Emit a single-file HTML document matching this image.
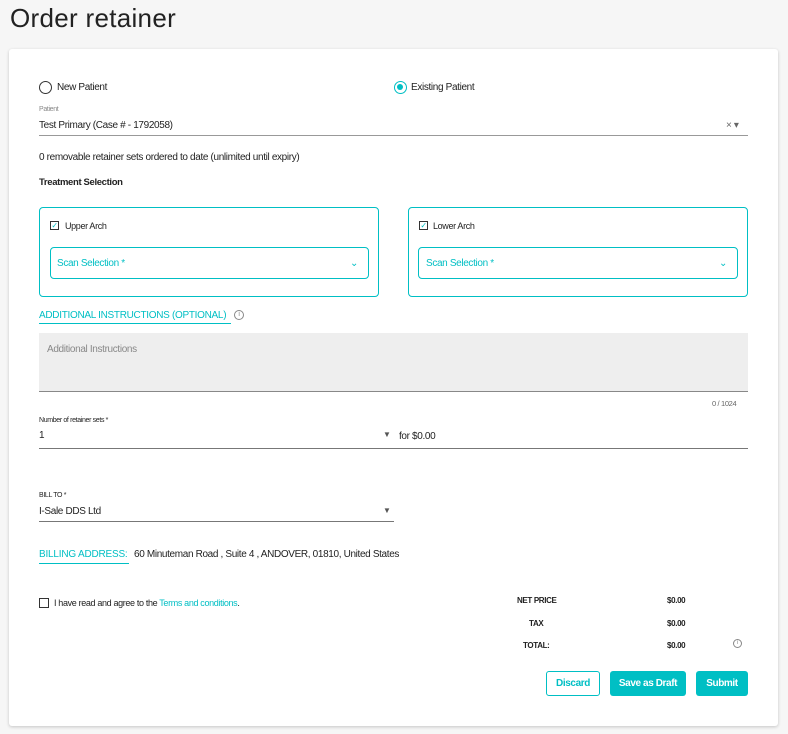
<!DOCTYPE html>
<html><head><style>
*{box-sizing:border-box;margin:0;padding:0}
body{width:788px;height:734px;background:#f6f6f6;font-family:"Liberation Sans",sans-serif;color:#222;position:relative;overflow:hidden;font-size:10px;letter-spacing:-0.35px}
.a{position:absolute}
h1{position:absolute;left:10px;top:3px;font-size:26px;font-weight:normal;color:#222;letter-spacing:0.3px}
.card{position:absolute;left:9px;top:49px;width:769px;height:677px;background:#fff;border-radius:3px;box-shadow:0 1px 3px rgba(0,0,0,.2)}
.t{color:#00bfc4}
.radio{width:13px;height:13px;border:1.5px solid #333;border-radius:50%}
.box{border:1px solid #00bfc4;border-radius:4px}
.cb{width:9px;height:9px;border:1px solid #333;font-size:8px;color:#00bfc4;line-height:7px;text-align:center}
.btn{position:absolute;top:671px;height:25px;border-radius:3px;font-size:10px;font-weight:bold;text-align:center;line-height:25px;letter-spacing:-0.4px}
</style></head><body>
<h1>Order retainer</h1>
<div class="card"></div>
<div class="a radio" style="left:39px;top:81px"></div>
<div class="a" style="left:57px;top:82px">New Patient</div>
<div class="a radio" style="left:394px;top:81px;border-color:#00bfc4"><div style="width:6px;height:6px;border-radius:50%;background:#00bfc4;margin:2px"></div></div>
<div class="a" style="left:411px;top:82px">Existing Patient</div>
<div class="a" style="left:39px;top:106px;font-size:7px;color:#888">Patient</div>
<div class="a" style="left:39px;top:120px">Test Primary (Case # - 1792058)</div>
<div class="a" style="left:726px;top:120px;color:#666">× ▾</div>
<div class="a" style="left:39px;top:135px;width:709px;height:1px;background:#999"></div>
<div class="a" style="left:39px;top:152px">0 removable retainer sets ordered to date (unlimited until expiry)</div>
<div class="a" style="left:39px;top:177px;font-weight:bold;font-size:9.5px">Treatment Selection</div>
<div class="a box" style="left:39px;top:207px;width:340px;height:90px"></div>
<div class="a cb" style="left:50px;top:221px">✓</div>
<div class="a" style="left:65px;top:221px;font-size:9px">Upper Arch</div>
<div class="a box" style="left:50px;top:247px;width:319px;height:32px"></div>
<div class="a t" style="left:57px;top:258px">Scan Selection *</div>
<div class="a t" style="left:350px;top:258px">⌄</div>
<div class="a box" style="left:408px;top:207px;width:340px;height:90px"></div>
<div class="a cb" style="left:419px;top:221px">✓</div>
<div class="a" style="left:433px;top:221px;font-size:9px">Lower Arch</div>
<div class="a box" style="left:418px;top:247px;width:320px;height:32px"></div>
<div class="a t" style="left:426px;top:258px">Scan Selection *</div>
<div class="a t" style="left:719px;top:258px">⌄</div>
<div class="a t" style="left:39px;top:310px;font-size:10px;letter-spacing:-0.3px">ADDITIONAL INSTRUCTIONS (OPTIONAL)</div>
<div class="a" style="left:39px;top:323px;width:192px;height:1px;background:#00bfc4"></div>
<div class="a" style="left:234px;top:310px;width:10px;height:10px;border:1px solid #888;border-radius:50%;font-size:7px;text-align:center;line-height:8px;color:#888">i</div>
<div class="a" style="left:39px;top:333px;width:709px;height:59px;background:#eee;border-bottom:1px solid #888"></div>
<div class="a" style="left:47px;top:344px;color:#888">Additional Instructions</div>
<div class="a" style="left:712px;top:399px;font-size:7.5px;color:#666">0 / 1024</div>
<div class="a" style="left:39px;top:417px;font-size:7px">Number of retainer sets *</div>
<div class="a" style="left:39px;top:430px">1</div>
<div class="a" style="left:383px;top:430px;font-size:8px;color:#555">▼</div>
<div class="a" style="left:399px;top:431px">for $0.00</div>
<div class="a" style="left:39px;top:448px;width:709px;height:1px;background:#777"></div>
<div class="a" style="left:39px;top:492px;font-size:7px">BILL TO *</div>
<div class="a" style="left:39px;top:506px">I-Sale DDS Ltd</div>
<div class="a" style="left:383px;top:506px;font-size:8px;color:#555">▼</div>
<div class="a" style="left:39px;top:521px;width:355px;height:1px;background:#777"></div>
<div class="a t" style="left:39px;top:549px;letter-spacing:-0.2px">BILLING ADDRESS:</div>
<div class="a" style="left:39px;top:563px;width:90px;height:1px;background:#00bfc4"></div>
<div class="a" style="left:134px;top:549px">60 Minuteman Road , Suite 4 , ANDOVER, 01810, United States</div>
<div class="a" style="left:39px;top:598px;width:10px;height:10px;border:1.5px solid #333"></div>
<div class="a" style="left:54px;top:598px;font-size:9px">I have read and agree to the <span class="t">Terms and conditions</span>.</div>
<div class="a" style="left:517px;top:596px;font-size:8px;font-weight:bold">NET PRICE</div>
<div class="a" style="left:667px;top:596px;font-size:8px;font-weight:bold">$0.00</div>
<div class="a" style="left:529px;top:619px;font-size:8px;font-weight:bold">TAX</div>
<div class="a" style="left:667px;top:619px;font-size:8px;font-weight:bold">$0.00</div>
<div class="a" style="left:523px;top:641px;font-size:8px;font-weight:bold">TOTAL:</div>
<div class="a" style="left:667px;top:641px;font-size:8px;font-weight:bold">$0.00</div>
<div class="a" style="left:733px;top:639px;width:9px;height:9px;border:1px solid #888;border-radius:50%;font-size:6px;text-align:center;line-height:7px;color:#888">i</div>
<div class="btn t" style="left:546px;width:54px;border:1px solid #00bfc4;background:#fff;line-height:23px">Discard</div>
<div class="btn" style="left:610px;width:76px;background:#00bfc4;color:#fff">Save as Draft</div>
<div class="btn" style="left:696px;width:52px;background:#00bfc4;color:#fff">Submit</div>
</body></html>
